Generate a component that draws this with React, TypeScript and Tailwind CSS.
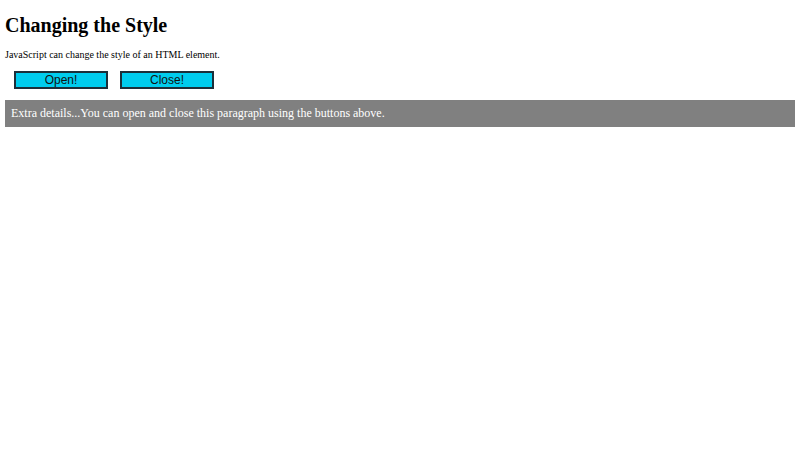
import { useState } from "react";

export default function App() {
  const [isOpen, setIsOpen] = useState(true);

  return (
    <div className="min-h-[450px] bg-white px-[5px] font-['Liberation_Serif',serif] text-black">
      <h1 className="pt-[12px] text-[20px] font-bold leading-[26px]">
        Changing the Style
      </h1>
      <p className="mt-[11px] text-[10px] leading-[12px]">
        JavaScript can change the style of an HTML element.
      </p>
      <div className="mt-[10px] flex gap-[12px] pl-[9px]">
        <button
          className="h-[18px] w-[94px] border-2 border-[#1c2f3a] bg-[#00ccee] font-['Liberation_Sans',sans-serif] text-[12px] leading-none text-[#111]"
          onClick={() => setIsOpen(true)}
        >
          Open!
        </button>
        <button
          className="h-[18px] w-[94px] border-2 border-[#1c2f3a] bg-[#00ccee] font-['Liberation_Sans',sans-serif] text-[12px] leading-none text-[#111]"
          onClick={() => setIsOpen(false)}
        >
          Close!
        </button>
      </div>
      {isOpen && (
        <div className="mt-[11px] h-[27px] bg-[#808080] px-[6px] text-[12px] leading-[27px] text-white">
          Extra details...You can open and close this paragraph using the
          buttons above.
        </div>
      )}
    </div>
  );
}
